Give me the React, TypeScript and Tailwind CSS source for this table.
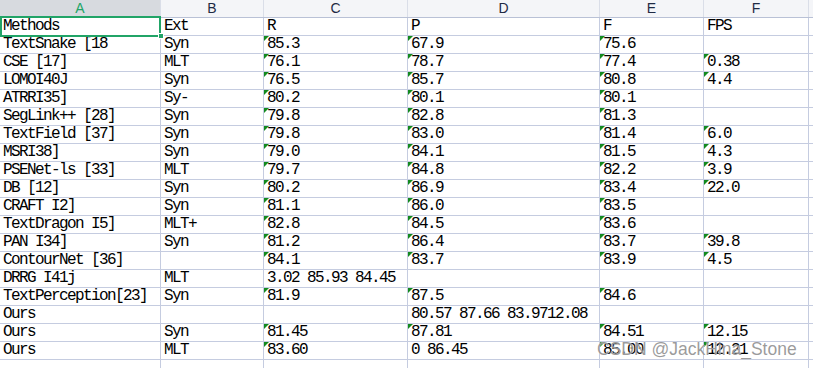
import React from 'react';

// widths incl. the 1px right gridline
const cols = [
  { key: 'A', w: 'w-[161px]' },
  { key: 'B', w: 'w-[103px]' },
  { key: 'C', w: 'w-[144px]' },
  { key: 'D', w: 'w-[192px]' },
  { key: 'E', w: 'w-[104px]' },
  { key: 'F', w: 'w-[105px]' },
];

const rows: string[][] = [
  ['Methods', 'Ext', 'R', 'P', 'F', 'FPS'],
  ['TextSnake [18', 'Syn', '85.3', '67.9', '75.6', ''],
  ['CSE [17]', 'MLT', '76.1', '78.7', '77.4', '0.38'],
  ['LOMOI40J', 'Syn', '76.5', '85.7', '80.8', '4.4'],
  ['ATRRI35]', 'Sy-', '80.2', '80.1', '80.1', ''],
  ['SegLink++ [28]', 'Syn', '79.8', '82.8', '81.3', ''],
  ['TextField [37]', 'Syn', '79.8', '83.0', '81.4', '6.0'],
  ['MSRI38]', 'Syn', '79.0', '84.1', '81.5', '4.3'],
  ['PSENet-ls [33]', 'MLT', '79.7', '84.8', '82.2', '3.9'],
  ['DB [12]', 'Syn', '80.2', '86.9', '83.4', '22.0'],
  ['CRAFT I2]', 'Syn', '81.1', '86.0', '83.5', ''],
  ['TextDragon I5]', 'MLT+', '82.8', '84.5', '83.6', ''],
  ['PAN I34]', 'Syn', '81.2', '86.4', '83.7', '39.8'],
  ['ContourNet [36]', '', '84.1', '83.7', '83.9', '4.5'],
  ['DRRG I41j', 'MLT', '3.02 85.93 84.45', '', '', ''],
  ['TextPerception[23]', 'Syn', '81.9', '87.5', '84.6', ''],
  ['Ours', '', '', '80.57 87.66 83.9712.08', '', ''],
  ['Ours', 'Syn', '81.45', '87.81', '84.51', '12.15'],
  ['Ours', 'MLT', '83.60', '0 86.45', '85.00', '12.21'],
];

// numbers stored as text get the little green marker
const isNumText = (v: string, col: number) => col >= 2 && /^\d+(\.\d+)?$/.test(v);

const Cell: React.FC<{ value: string; col: number; selected?: boolean }> = ({ value, col, selected }) => (
  <div
    className={`${cols[col].w} relative h-[18px] shrink-0 border-r border-b border-[#c5cce0] flex items-end pl-[3px] pb-[1px] whitespace-nowrap overflow-visible`}
  >
    {isNumText(value, col) && (
      <span className="absolute top-0 left-0 w-0 h-0 border-t-[5px] border-r-[5px] border-t-[#138a1f] border-r-transparent" />
    )}
    <span className="font-['Liberation_Mono',monospace] text-[16px] leading-[16px] tracking-[-1.6px] text-black">
      {value}
    </span>
    {selected && (
      <>
        <span className="absolute -top-[2px] left-0 -right-[1px] -bottom-[2px] border-2 border-[#21a467] z-10" />
        <span className="absolute -right-[4px] -bottom-[4px] w-[6px] h-[6px] bg-[#21a467] border border-white z-20" />
      </>
    )}
  </div>
);

const App: React.FC = () => {
  return (
    <div className="relative w-[813px] h-[368px] overflow-hidden bg-white">
      {/* column letters */}
      <div className="flex h-[18px] border-b border-[#b9c1d6] bg-[#f4f5f8]">
        {cols.map((c, i) => (
          <div
            key={c.key}
            className={`${c.w} shrink-0 h-full flex items-center justify-center border-r border-[#dadee8] font-['Liberation_Sans',sans-serif] text-[14px] ${
              i === 0 ? 'bg-[#d7dadf] text-[#21a467]' : 'text-[#1f2a44]'
            }`}
          >
            {c.key}
          </div>
        ))}
        <div className="flex-1" />
      </div>

      {rows.map((row, r) => (
        <div key={`${row[0]}-${r}`} className="flex">
          {row.map((v, c) => (
            <Cell key={c} value={v} col={c} selected={r === 0 && c === 0} />
          ))}
          <div className="flex-1 h-[18px] border-b border-[#c5cce0]" />
        </div>
      ))}
      <div className="flex h-[18px]">
        {cols.map((c) => (
          <div key={c.key} className={`${c.w} shrink-0 border-r border-[#c5cce0]`} />
        ))}
      </div>

      {/* watermark */}
      <div className="absolute left-[597px] top-[338px] font-['Liberation_Sans',sans-serif] text-[17.5px] leading-[22px] text-[#7a7a7a]/75 whitespace-nowrap [text-shadow:0_0_1px_#ffffff]">
        CSDN @JackHina_Stone
      </div>
    </div>
  );
};

export default App;
